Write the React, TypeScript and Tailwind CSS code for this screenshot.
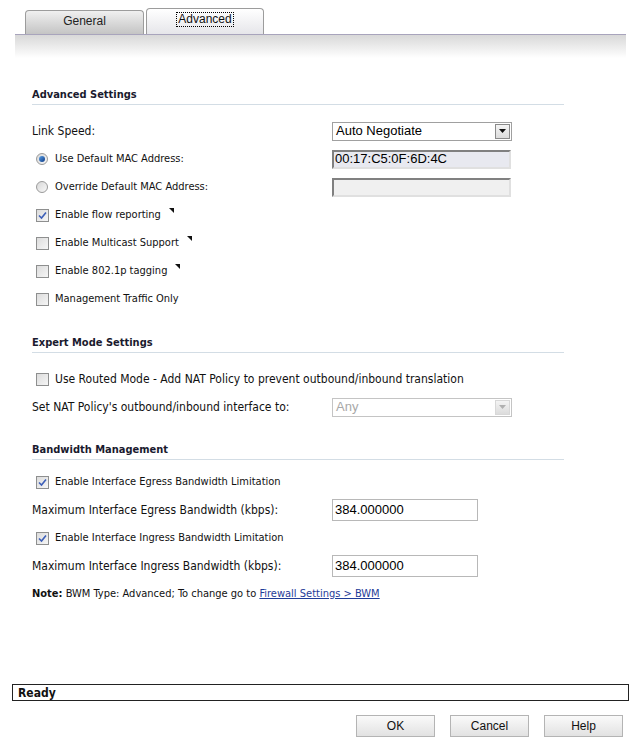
import type { ReactNode } from "react";

const tahoma = "font-['Tahoma','DejaVu_Sans_Condensed','DejaVu_Sans',sans-serif]";
const arial = "font-['Liberation_Sans',Arial,sans-serif]";

function SectionHeading({ title }: { title: string }) {
  return (
    <div className="w-[532px] border-b border-[#d3dde5] pb-[3px]">
      <h2 className={`${tahoma} text-[11px] font-bold leading-[13px] text-[#1a1a2e]`}>{title}</h2>
    </div>
  );
}

function Checkbox({ checked }: { checked?: boolean }) {
  return (
    <span className="relative flex h-[13px] w-[13px] shrink-0 items-center justify-center border border-[#8e8f8f] bg-gradient-to-br from-[#dcdcdc] to-[#f6f6f6]">
      {checked && (
        <svg width="9" height="9" viewBox="0 0 9 9">
          <path d="M1 4.5 L3.5 7 L8 1.5" fill="none" stroke="#3d5fb8" strokeWidth="1.6" />
        </svg>
      )}
    </span>
  );
}

function Radio({ checked }: { checked?: boolean }) {
  return (
    <span className="flex h-[12px] w-[12px] shrink-0 items-center justify-center rounded-full border border-[#9a9a9a] bg-gradient-to-br from-[#d8d8d8] to-[#f8f8f8]">
      {checked && <span className="h-[6px] w-[6px] rounded-full bg-gradient-to-br from-[#5aa0e6] to-[#103a86]" />}
    </span>
  );
}

function Marker() {
  return (
    <svg width="5" height="5" viewBox="0 0 5 5" className="ml-[8px] -mt-[10px]">
      <path d="M0 0 H5 V5 Z" fill="#111" />
    </svg>
  );
}

function Row({ children, className = "" }: { children: ReactNode; className?: string }) {
  return <div className={`flex h-[28px] items-center ${className}`}>{children}</div>;
}

function CheckRow({ label, checked, marker, wide }: { label: string; checked?: boolean; marker?: boolean; wide?: boolean }) {
  return (
    <Row className="pl-[4px]">
      <Checkbox checked={checked} />
      <span className={`${tahoma} ml-[6px] ${wide ? "text-[12px]" : "text-[11px]"} text-[#111]`}>{label}</span>
      {marker && <Marker />}
    </Row>
  );
}

function Select({ value, disabled }: { value: string; disabled?: boolean }) {
  return (
    <div
      className={`flex h-[19px] w-[180px] items-center border ${
        disabled ? "border-[#c4c4c4]" : "border-[#a0a0a0]"
      } bg-white`}
    >
      <span className={`${arial} flex-1 pl-[3px] text-[13px] ${disabled ? "text-[#a8a8a8]" : "text-black"}`}>
        {value}
      </span>
      <span
        className={`mr-[1px] flex h-[15px] w-[15px] items-center justify-center border ${
          disabled ? "border-[#d8d8d8]" : "border-[#8a8a8a]"
        } bg-gradient-to-b from-[#f4f4f4] to-[#dcdcdc]`}
      >
        <svg width="7" height="4" viewBox="0 0 7 4">
          <path d="M0 0 H7 L3.5 4 Z" fill={disabled ? "#b0b0b0" : "#111"} />
        </svg>
      </span>
    </div>
  );
}

export default function App() {
  return (
    <div className="relative h-[744px] w-[636px] overflow-hidden bg-white">
      {/* tab strip */}
      <div className="ml-[15px] w-[611px] pt-[8px]">
        <div className="flex items-end pl-[10px]">
          <div
            className={`${arial} flex h-[24px] w-[119px] items-start justify-center rounded-t-[4px] border border-b-0 border-[#9c9c9c] bg-gradient-to-b from-[#f0f0f0] to-[#c4c4c4] pt-[1px] text-[12px] text-[#222]`}
          >
            General
          </div>
          <div
            className={`${arial} ml-[2px] flex h-[26px] w-[118px] items-start justify-center rounded-t-[4px] border border-b-0 border-[#9c9c9c] bg-gradient-to-b from-white to-[#e6e6ea] pt-[3px] text-[12px] text-[#111]`}
          >
            <span className="border border-dotted border-black px-px leading-[13px]">Advanced</span>
          </div>
        </div>
        <div className="h-[24px] border-t border-[#a8a4bc] bg-gradient-to-b from-[#d8d8d8] to-white" />
      </div>

      {/* settings body */}
      <div className="pl-[32px] pt-[30px]">
        <SectionHeading title="Advanced Settings" />
        <div className="pt-[12px]">
          <Row>
            <span className={`${tahoma} w-[300px] text-[12px] text-[#111]`}>Link Speed:</span>
            <Select value="Auto Negotiate" />
          </Row>
          <Row>
            <div className="flex w-[300px] items-center pl-[4px]">
              <Radio checked />
              <span className={`${tahoma} ml-[7px] text-[11px] text-[#111]`}>Use Default MAC Address:</span>
            </div>
            <div
              className={`${arial} flex h-[19px] w-[179px] items-center border-2 border-b-[#e0e0e0] border-l-[#808080] border-r-[#e0e0e0] border-t-[#808080] bg-[#e8e9f0] pl-[1px] text-[13px] text-black`}
            >
              00:17:C5:0F:6D:4C
            </div>
          </Row>
          <Row>
            <div className="flex w-[300px] items-center pl-[4px]">
              <Radio />
              <span className={`${tahoma} ml-[7px] text-[11px] text-[#111]`}>Override Default MAC Address:</span>
            </div>
            <div className="h-[19px] w-[179px] border-2 border-b-[#e0e0e0] border-l-[#808080] border-r-[#e0e0e0] border-t-[#808080] bg-[#f0f0f0]" />
          </Row>
          <CheckRow label="Enable flow reporting" checked marker />
          <CheckRow label="Enable Multicast Support" marker />
          <CheckRow label="Enable 802.1p tagging" marker />
          <CheckRow label="Management Traffic Only" />
        </div>

        <div className="pt-[23px]">
          <SectionHeading title="Expert Mode Settings" />
        </div>
        <div className="pt-[12px]">
          <CheckRow label="Use Routed Mode - Add NAT Policy to prevent outbound/inbound translation" wide />
          <Row>
            <span className={`${tahoma} w-[300px] text-[12px] text-[#111]`}>
              Set NAT Policy&apos;s outbound/inbound interface to:
            </span>
            <Select value="Any" disabled />
          </Row>
        </div>

        <div className="pt-[22px]">
          <SectionHeading title="Bandwidth Management" />
        </div>
        <div className="pt-[8px]">
          <CheckRow label="Enable Interface Egress Bandwidth Limitation" checked />
          <Row>
            <span className={`${tahoma} w-[300px] text-[12px] text-[#111]`}>Maximum Interface Egress Bandwidth (kbps):</span>
            <div className={`${arial} flex h-[22px] w-[146px] items-center border border-[#b8b8b8] pl-[2px] text-[13px] text-black`}>
              384.000000
            </div>
          </Row>
          <CheckRow label="Enable Interface Ingress Bandwidth Limitation" checked />
          <Row>
            <span className={`${tahoma} w-[300px] text-[12px] text-[#111]`}>Maximum Interface Ingress Bandwidth (kbps):</span>
            <div className={`${arial} flex h-[22px] w-[146px] items-center border border-[#b8b8b8] pl-[2px] text-[13px] text-black`}>
              384.000000
            </div>
          </Row>
          <Row>
            <span className={`${tahoma} text-[11px] text-[#111]`}>
              <b>Note:</b> BWM Type: Advanced; To change go to{" "}
              <a href="#" className="text-[#1f3c98] underline">
                Firewall Settings &gt; BWM
              </a>
            </span>
          </Row>
        </div>
      </div>

      {/* status bar */}
      <div className="absolute left-[12px] top-[684px] flex h-[17px] w-[617px] items-center border border-[#222] pl-[5px]">
        <span className={`${tahoma} text-[12px] font-bold text-[#111]`}>Ready</span>
      </div>

      {/* dialog buttons */}
      <div className="absolute left-[356px] top-[715px] flex gap-[15px]">
        {["OK", "Cancel", "Help"].map((b) => (
          <button
            key={b}
            className={`${arial} h-[22px] w-[79px] border border-[#b4b4b4] bg-gradient-to-b from-[#fafafa] to-[#e2e2e2] text-[12px] text-[#111]`}
          >
            {b}
          </button>
        ))}
      </div>
    </div>
  );
}
